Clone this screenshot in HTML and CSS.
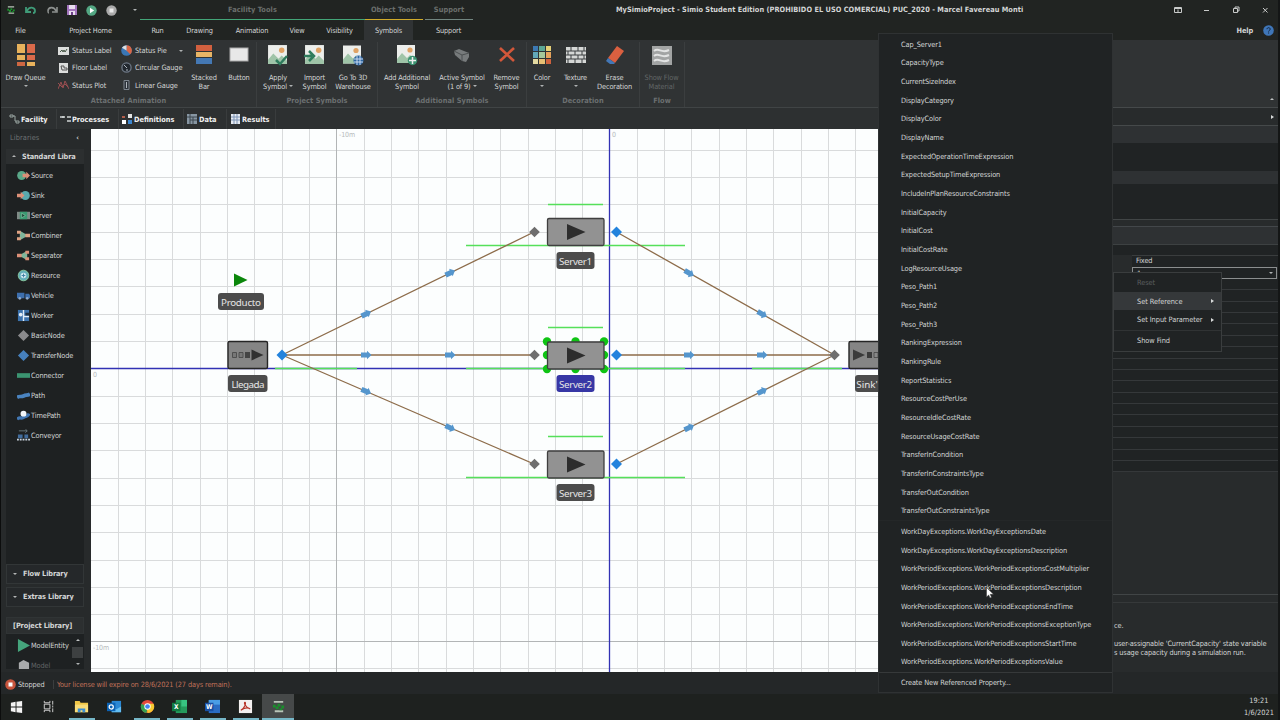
FILE: index.html
```html
<!DOCTYPE html>
<html lang="en">
<head>
  <meta charset="UTF-8">
  <meta name="viewport" content="width=device-width, initial-scale=1.0">
  <title>MySimioProject - Simio Student Edition</title>
  <link rel="stylesheet" href="styles.css">
</head>
<body>
  <!-- shared symbols -->
  <svg class="defs" width="0" height="0">
    <symbol id="picture" viewBox="0 0 20 20">
      <rect x="1" y="1" width="18" height="18" fill="#eceeeb"/>
      <circle cx="14" cy="6" r="2.6" fill="#e0a264"/>
      <path d="M1 15l5-6 5 5 3-3 5 5v3H1z" fill="#9fc4a8"/>
    </symbol>
    <symbol id="simio" viewBox="0 0 16 16">
      <path d="M3 2h10v2H3zM4 12h9v2H4z" fill="#b9c4b8"/>
      <path d="M2 6h3v3H2zM7 5h3v3H7zM11 7h3v3h-3zM5 8h3v3H5zM9 10h3v2H9z" fill="#1a8f2c"/>
    </symbol>
  </svg>

  <div class="app">
    <header class="titlebar">
      <div class="quick">
        <svg width="10" height="10"><use href="#simio"/></svg>
        <svg width="12" height="10" viewBox="0 0 12 10"><path d="M1 2v5h5M2 6c2-5 8-4 8 0 0 1-1 2-2 2" fill="none" stroke="#3f9b78" stroke-width="1.8"/></svg>
        <svg width="12" height="10" viewBox="0 0 12 10"><path d="M11 2v5H6M10 6C8 1 2 2 2 6c0 1 0 2 1 2" fill="none" stroke="#8c908e" stroke-width="1.6"/></svg>
        <svg width="10" height="10" viewBox="0 0 10 10"><path d="M0 0h10v10H0z" fill="#a274bd"/><path d="M2 0h6v4H2zM2 6h6v4H2z" fill="#e9def0"/><path d="M4 7h2v3H4z" fill="#6c4188"/></svg>
        <svg width="11" height="11" viewBox="0 0 11 11"><circle cx="5.500" cy="5.500" r="5.200" fill="#53a783"/><path d="M4 2.700l4.200 2.800L4 8.300z" fill="#fff"/></svg>
        <svg width="11" height="11" viewBox="0 0 11 11"><circle cx="5.500" cy="5.500" r="5.200" fill="#aaa"/><path d="M3.500 3.500h4v4h-4z" fill="#e9e9e9"/></svg>
        <i class="caret"></i>
      </div>
      <div class="tools tools-facility">Facility Tools</div>
      <div class="tools tools-object">Object Tools</div>
      <div class="tools tools-support">Support</div>
      <div class="title">MySimioProject - Simio Student Edition (PROHIBIDO EL USO COMERCIAL) PUC_2020 - Marcel Favereau Monti</div>
      <svg class="win" width="100" height="10" viewBox="0 0 100 10" fill="none" stroke="#c9cbca">
        <path d="M.5 2.500h7v5h-7zM.5 3.500h7M4 7V4.500M30 5.500h5"/><path d="M59.500 3.500h4v4h-4zM61 3V2h4v4h-1M89 3l4.500 4.500M93.500 3L89 7.500"/>
      </svg>
    </header>

    <nav class="tabs">
      <span class="tab" style="width:39px">File</span>
      <span class="tab" style="width:101px">Project Home</span>
      <span class="tab" style="width:33px">Run</span>
      <span class="tab" style="width:51px">Drawing</span>
      <span class="tab" style="width:54px">Animation</span>
      <span class="tab" style="width:36px">View</span>
      <span class="tab" style="width:49px">Visibility</span>
      <span class="tab active" style="width:49px">Symbols</span>
      <span class="tab" style="width:71px">Support</span>
      <span class="help">Help</span>
      <svg width="11" height="11" viewBox="0 0 11 11"><circle cx="5.500" cy="5.500" r="5.300" fill="#3f76b8"/><path d="M4 4.200c0-2 3.200-2 3.200 0 0 1.200-1.600 1.200-1.600 2.300M5.600 7.500v1" stroke="#132238" fill="none"/></svg>
    </nav>

    <section class="ribbon">
      <div class="group" style="width:256px">
        <div class="tools-row">
          <div class="big" style="width:49px">
            <svg width="20" height="22" viewBox="0 0 20 22"><path d="M1 0h8v9H1zM1 11h8v5H1z" fill="#e8b25c"/><path d="M11 0h8v9h-8zM11 11h8v5h-8z" fill="#db6a4a"/><path d="M1 18h8v4H1z" fill="#cf6742"/><path d="M11 18h8v4h-8z" fill="#e8b25c"/></svg>
            <span>Draw Queue</span><i class="caret"></i>
          </div>
          <div class="small-col" style="width:63px">
            <div><svg width="11" height="10" viewBox="0 0 11 10"><path d="M0 1h11v8H0z" fill="#dcdedd"/><path d="M2 6l2-2 1 2 1-2 1 2 2-3" stroke="#454" fill="none"/></svg>Status Label</div>
            <div><svg width="11" height="10" viewBox="0 0 11 10"><path d="M1 0h9v10H1z" fill="#dcdedd"/><path d="M3 3h3v2h3v2H4z" stroke="#555" fill="none"/></svg>Floor Label</div>
            <div><svg width="11" height="10" viewBox="0 0 11 10"><path d="M0 9l3-7 2 6 2-7 4 8M0 3l4 4 3-3 3 3" stroke="#984e50" fill="none"/></svg>Status Plot</div>
          </div>
          <div class="small-col" style="width:66px">
            <div><svg width="11" height="11" viewBox="0 0 11 11"><circle cx="5.500" cy="5.500" r="5.300" fill="#3a76b5"/><path d="M5.500.2a5.300 5.300 0 0 1 3.700 9.100L5.500 5.500z" fill="#db6645"/><path d="M5.500.2a5.300 5.300 0 0 0-4.600 2.600l4.600 2.700z" fill="#ddd"/></svg>Status Pie<i class="caret push"></i></div>
            <div><svg width="11" height="11" viewBox="0 0 11 11"><circle cx="5.500" cy="5.500" r="4.600" stroke="#6d7785" stroke-width="1.300" fill="#22282f"/><path d="M3 3l3 3M5 8h2" stroke="#aeb6be"/></svg>Circular Gauge</div>
            <div><svg width="11" height="11" viewBox="0 0 11 11"><path d="M3 .5h5v9H3z" stroke="#7c848c" fill="#2d333a"/><path d="M5.500 2v6" stroke="#b0b6bc"/></svg>Linear Gauge</div>
          </div>
          <div class="big" style="width:34px">
            <svg width="18" height="22" viewBox="0 0 18 22"><path d="M1 1h16v6H1z" fill="#d2603f"/><path d="M1 8h16v5H1z" fill="#e8b566"/><path d="M1 14h16v6H1z" fill="#4478b4"/></svg>
            <span>Stacked<br>Bar</span>
          </div>
          <div class="big" style="width:36px">
            <svg width="20" height="22" viewBox="0 0 20 22"><rect x="1" y="4" width="18" height="13" fill="#e8e8e8" stroke="#aaa"/></svg>
            <span>Button</span>
          </div>
        </div>
        <div class="caption">Attached Animation</div>
      </div>

      <div class="group" style="width:121px">
        <div class="tools-row">
          <div class="big" style="width:42px">
            <svg width="22" height="22" viewBox="0 0 22 22"><use href="#picture" width="21" height="21"/><path d="M9 16l4 4 7-8" stroke="#2f7c5d" stroke-width="2.500" fill="none"/></svg>
            <span>Apply<br>Symbol <i class="caret"></i></span>
          </div>
          <div class="big" style="width:31px">
            <svg width="22" height="22" viewBox="0 0 22 22"><use href="#picture" width="21" height="21"/><path d="M0 12h8M5 7l5 5-5 5" stroke="#2f7c5d" stroke-width="2.500" fill="none"/></svg>
            <span>Import<br>Symbol</span>
          </div>
          <div class="big" style="width:46px">
            <svg width="22" height="22" viewBox="0 0 22 22"><use href="#picture" width="20" height="21"/><circle cx="16.500" cy="16.500" r="5" fill="#2d65a0"/><path d="M12 15h9M12 18h9M15 12v9M18 12v9" stroke="#c9daf0"/></svg>
            <span>Go To 3D<br>Warehouse</span>
          </div>
        </div>
        <div class="caption">Project Symbols</div>
      </div>

      <div class="group" style="width:149px">
        <div class="tools-row">
          <div class="big" style="width:58px">
            <svg width="22" height="22" viewBox="0 0 22 22"><use href="#picture" width="20" height="20"/><circle cx="16.500" cy="16.500" r="4.700" fill="#3b9371"/><path d="M13 16.500h7M16.500 13v7" stroke="#eee" stroke-width="1.500"/></svg>
            <span>Add Additional<br>Symbol</span>
          </div>
          <div class="big" style="width:52px">
            <svg width="22" height="22" viewBox="0 0 22 22"><path d="M3 7l5-2 10 4v4l-3 5-4-1-7-6z" fill="#777b7c"/><path d="M3 7l8 4 7-2M11 11v6" stroke="#4d5152" fill="none"/></svg>
            <span>Active Symbol<br>(1 of 9) <i class="caret"></i></span>
          </div>
          <div class="big" style="width:37px">
            <svg width="22" height="22" viewBox="0 0 22 22"><path d="M4 4l14 13M18 4L4 17" stroke="#d3573a" stroke-width="2.600"/></svg>
            <span>Remove<br>Symbol</span>
          </div>
        </div>
        <div class="caption">Additional Symbols</div>
      </div>

      <div class="group" style="width:113px">
        <div class="tools-row">
          <div class="big" style="width:30px">
            <svg width="20" height="22" viewBox="0 0 20 22"><path d="M1 2h5v5H1z" fill="#3c79b4"/><path d="M7 2h6v5H7z" fill="#5da795"/><path d="M14 2h5v5h-5z" fill="#e7d178"/><path d="M1 8h5v6H1z" fill="#62a8b8"/><path d="M7 8h6v6H7z" fill="#a6c99a"/><path d="M14 8h5v6h-5z" fill="#e6a45c"/><path d="M1 15h5v5H1z" fill="#e3d9a1"/><path d="M7 15h6v5H7z" fill="#e6bf74"/><path d="M14 15h5v5h-5z" fill="#cf613d"/></svg>
            <span>Color</span><i class="caret"></i>
          </div>
          <div class="big" style="width:37px">
            <svg width="22" height="22" viewBox="0 0 22 22"><path d="M1 3h20v16H1z" fill="#d5d7d6"/><path d="M1 7h20M1 11h20M1 15h20M6 3v4M13 3v4M19 3v4M3 7v4M10 7v4M17 7v4M6 11v4M13 11v4M19 11v4M3 15v4M10 15v4M17 15v4" stroke="#3b3e40"/></svg>
            <span>Texture</span><i class="caret"></i>
          </div>
          <div class="big" style="width:41px">
            <svg width="22" height="22" viewBox="0 0 22 22"><path d="M13 2l7 5-9 12-7-5z" fill="#da6040"/><path d="M4 14l7 5-1 1H6l-4-3z" fill="#4377b6"/></svg>
            <span>Erase<br>Decoration</span>
          </div>
        </div>
        <div class="caption">Decoration</div>
      </div>

      <div class="group dim" style="width:45px">
        <div class="tools-row">
          <div class="big" style="width:43px">
            <svg width="22" height="22" viewBox="0 0 22 22"><path d="M1 2h20v19H1z" fill="#a2a4a4"/><path d="M3 7c5-4 7 3 15-1M3 12c5-4 7 3 15-1M3 17c5-4 7 3 15-1" stroke="#e2e3e3" stroke-width="2" fill="none"/></svg>
            <span>Show Flow<br>Material</span>
          </div>
        </div>
        <div class="caption">Flow</div>
      </div>
    </section>

    <nav class="views">
      <span style="width:51px"><svg width="11" height="10" viewBox="0 0 11 10"><path d="M1 1h3v2H1zM7 7h3v2H7zM4 2h2v5h1" stroke="#9aa5a2" fill="none"/></svg>Facility</span>
      <span style="width:62px"><svg width="11" height="10" viewBox="0 0 11 10"><path d="M0 3h5M7 3h4M7 7h4M3 2v2" stroke="#d0d4d4" stroke-width="1.500" fill="none"/></svg>Processes</span>
      <span style="width:65px"><svg width="11" height="10" viewBox="0 0 11 10"><path d="M6 0h4v4H6z" fill="#e3e3e3"/><path d="M0 6h4v4H0z" fill="#fff"/><path d="M6 6h4v4H6z" fill="#3c86cf"/><path d="M0 2h3v2H0z" fill="#b25d4b"/></svg>Definitions</span>
      <span style="width:43px"><svg width="11" height="10" viewBox="0 0 11 10"><path d="M0 0h10v10H0z" fill="#8796a3"/><path d="M0 3h10M3 0v10M6 3v7M3 6h7" stroke="#3c464f"/></svg>Data</span>
      <span style="width:49px"><svg width="11" height="10" viewBox="0 0 11 10"><path d="M1 0h9v10H1z" fill="#e5eaf0"/><path d="M1 3h9M1 6h9M4 0v10M7 0v10" stroke="#7d93b5"/></svg>Results</span>
    </nav>

    <main class="work">
      <aside class="sidebar">
        <div class="side-title">Libraries<b>‹</b></div>
        <div class="lib-head first"><i class="chev up"></i>Standard Libra</div>
        <ul class="lib">
          <li><svg viewBox="0 0 14 14"><circle cx="5" cy="7" r="4.800" fill="#5aa889"/><path d="M6 5h4V3l4 4-4 4V9H6z" fill="#dc9078"/></svg>Source</li>
          <li><svg viewBox="0 0 14 14"><circle cx="9" cy="7" r="4.800" fill="#5aa9ad"/><path d="M0 5h4V3l4 4-4 4V9H0z" fill="#dc9078"/></svg>Sink</li>
          <li><svg viewBox="0 0 14 14"><path d="M0 3h14v8H0z" fill="#7f8a86"/><path d="M3 3h8v8H3z" fill="#3a9a72"/><path d="M5 4.500l4 2.500-4 2.500z" fill="#1d4737" stroke="#9fd0b8" stroke-width=".6"/></svg>Server</li>
          <li><svg viewBox="0 0 14 14"><path d="M3 2l9 5-9 5z" fill="#7fb59a"/><path d="M0 2h4v3H0zM0 9h4v3H0zM9 5h5v4H9z" fill="#dfa283"/></svg>Combiner</li>
          <li><svg viewBox="0 0 14 14"><path d="M11 2L2 7l9 5z" fill="#7fb59a"/><path d="M9 2h4v3H9zM9 9h4v3H9zM0 5h5v4H0z" fill="#dc9078"/></svg>Separator</li>
          <li><svg viewBox="0 0 14 14"><circle cx="7" cy="7" r="5.700" fill="#64aeb9" stroke="#8acb9f"/><circle cx="7" cy="7" r="3" fill="#cde6ee"/><path d="M5 7h4M7 5v4" stroke="#3d80a3"/></svg>Resource</li>
          <li><svg viewBox="0 0 14 14"><path d="M0 4h8v6H0zM9 5h4l1 2v3H9z" fill="#3d6fae"/><circle cx="3" cy="10" r="1.500" fill="#8ea9cb"/><circle cx="11" cy="10" r="1.500" fill="#8ea9cb"/></svg>Vehicle</li>
          <li><svg viewBox="0 0 14 14"><path d="M1 1h12v12H1z" fill="#3c72ac"/><circle cx="4" cy="6" r="2" fill="#e3eef8"/><path d="M7 1v12M7 8h6" stroke="#e3eef8" stroke-width="1.500"/><path d="M9 4h4v3H9z" fill="#1d2e41"/></svg>Worker</li>
          <li><svg viewBox="0 0 14 14"><path d="M7 1l6 6-6 6-6-6z" fill="#8a8a8c"/></svg>BasicNode</li>
          <li><svg viewBox="0 0 14 14"><path d="M7 1l6 6-6 6-6-6z" fill="#4680bd"/></svg>TransferNode</li>
          <li><svg viewBox="0 0 14 14"><path d="M0 4.500h14v5H0z" fill="#3b9471"/></svg>Connector</li>
          <li><svg viewBox="0 0 14 14"><path d="M0 9c3-2 4 0 7-1.500s4 0 7-2" stroke="#4a83bf" stroke-width="4" fill="none"/></svg>Path</li>
          <li><svg viewBox="0 0 14 14"><path d="M0 11c3-3 4 0 7-2s4 0 6-4" stroke="#4277b3" stroke-width="3.500" fill="none"/><circle cx="7" cy="5" r="3.200" fill="#f2f6fa"/></svg>TimePath</li>
          <li><svg viewBox="0 0 14 14"><path d="M2 2h9M9 0l2 2-2 2" stroke="#6c7b80" fill="none"/><path d="M1 6h5v4H1zM8 6h4v4H8z" fill="#416c9c"/><path d="M0 11.500h14" stroke="#c9d4dd" stroke-width="2" stroke-dasharray="2 1"/></svg>Conveyor</li>
        </ul>
        <div class="lib-head boxed"><i class="chev"></i>Flow Library</div>
        <div class="lib-head boxed"><i class="chev"></i>Extras Library</div>
        <div class="lib-head project">[Project Library]</div>
        <div class="project-list">
          <ul class="lib">
            <li><svg viewBox="0 0 14 14"><path d="M1 0l13 7-13 7z" fill="#45a57c"/></svg>ModelEntity</li>
            <li class="dim"><svg viewBox="0 0 14 14"><path d="M2 4l5-3 6 3v8H2z" fill="#a9abac"/></svg>Model</li>
          </ul>
          <div class="scroll"><i class="caret up"></i><em></em><i class="caret"></i></div>
        </div>
      </aside>

      <svg class="canvas" width="787" height="543" viewBox="91 129 787 543">
        <defs>
          <g id="server">
            <rect x="-28" y="-13.500" width="56.500" height="27" rx="1.500" fill="#929292" stroke="#3f3f3f" stroke-width="1.300"/>
            <path d="M-8.500-8L10 0-8.500 8z" fill="#2d2d2d"/>
          </g>
          <path id="in" d="M0-5.300L5.300 0 0 5.300-5.300 0z" fill="#6e6e6e"/>
          <path id="out" d="M0-5.500L5.500 0 0 5.500-5.500 0z" fill="#2383dd"/>
          <path id="arrow" d="M-5-2.600H1V-4.200L5.500 0 1 4.200V2.600H-5z" fill="#5596cd"/>
          <circle id="grip" r="4.200" fill="#0fc414"/>
        </defs>
        <rect x="91" y="129" width="787" height="543" fill="#fcfefe"/>
        <path class="grid" d="M118.500 129v543M145.500 129v543M172.500 129v543M200.500 129v543M227.500 129v543M254.500 129v543M282.500 129v543M309.500 129v543M364.500 129v543M391.500 129v543M418.500 129v543M446.500 129v543M473.500 129v543M500.500 129v543M528.500 129v543M555.500 129v543M582.500 129v543M637.500 129v543M664.500 129v543M691.500 129v543M719.500 129v543M746.500 129v543M773.500 129v543M801.500 129v543M828.500 129v543M855.500 129v543"/>
        <path class="grid" d="M91 150.500h787M91 177.500h787M91 204.500h787M91 232.500h787M91 259.500h787M91 286.500h787M91 314.500h787M91 341.500h787M91 396.500h787M91 423.500h787M91 450.500h787M91 478.500h787M91 505.500h787M91 532.500h787M91 560.500h787M91 587.500h787M91 614.500h787M91 668.500h787"/>
        <path class="grid major" d="M336.500 129v543M91 641.500h787"/>
        <path d="M91 368.500h787M609.500 129v543" stroke="#3232b4" stroke-width="1.300"/>
        <g class="mark"><text x="339" y="137">-10m</text><text x="612" y="137">0</text><text x="93" y="377">0</text><text x="93" y="650">-10m</text></g>

        <path d="M548 204.500h55M548 327.500h55M548 436.500h55M466 245.500h219M466 368.500h219M466 477.500h219M275 368.500h82M752 368.500h90" stroke="#55e05a" stroke-width="1.400"/>
        <path d="M282 355L534 232M282 355H534M282 355L534 464M616.500 232L834.500 355M616.500 355H834.500M616.500 464L834.500 355" stroke="#8d6c4a" stroke-width="1.300" fill="none"/>
        <use href="#arrow" transform="translate(366 314) rotate(-26)"/><use href="#arrow" transform="translate(450 273) rotate(-26)"/>
        <use href="#arrow" x="366" y="355"/><use href="#arrow" x="450" y="355"/>
        <use href="#arrow" transform="translate(366 391.300) rotate(23.400)"/><use href="#arrow" transform="translate(450 427.700) rotate(23.400)"/>
        <use href="#arrow" transform="translate(689 273) rotate(29.400)"/><use href="#arrow" transform="translate(762 314) rotate(29.400)"/>
        <use href="#arrow" x="689" y="355"/><use href="#arrow" x="762" y="355"/>
        <use href="#arrow" transform="translate(689 427.700) rotate(-26.500)"/><use href="#arrow" transform="translate(762 391.300) rotate(-26.500)"/>

        <use href="#in" x="534.500" y="232"/><use href="#in" x="534.500" y="355"/><use href="#in" x="534.500" y="464"/><use href="#in" x="834.500" y="355"/>
        <use href="#out" x="282" y="355"/><use href="#out" x="616.500" y="232"/><use href="#out" x="616.500" y="355"/><use href="#out" x="616.500" y="464"/>

        <use href="#grip" x="547" y="341.500"/><use href="#grip" x="575.500" y="341.500"/><use href="#grip" x="604" y="341.500"/>
        <use href="#grip" x="547" y="355"/><use href="#grip" x="604" y="355"/>
        <use href="#grip" x="547" y="369"/><use href="#grip" x="575.500" y="369"/><use href="#grip" x="604" y="369"/>
        <use href="#server" x="575.500" y="232"/><use href="#server" x="575.500" y="355.500"/><use href="#server" x="575.500" y="464.500"/>

        <rect x="228" y="341.500" width="39.500" height="27" rx="1.500" fill="#858585" stroke="#252525" stroke-width="1.400"/>
        <path d="M232.500 352.500h4v5h-4zM239 352.500h4v5h-4z" fill="#777" stroke="#444" stroke-width=".8"/><path d="M245 352h5v6h-5z" fill="#444"/><path d="M251.500 349.500l12 5.500-12 5.500z" fill="#303030"/>
        <rect x="849" y="341.500" width="40" height="27" rx="1.500" fill="#858585" stroke="#252525" stroke-width="1.400"/>
        <path d="M853 349.500l12 5.500-12 5.500z" fill="#3a3a3a"/><path d="M867 352h5v6h-5z" fill="#3a3a3a"/><path d="M874 352.500h4v5h-4z" fill="#888" stroke="#444" stroke-width=".8"/>
        <path d="M234 273.500l13.500 6.500-13.500 6.500z" fill="#0b870b"/>

        <g class="tag">
          <rect x="218" y="293" width="46" height="17" rx="3"/><text x="241" y="305.500" textLength="40">Producto</text>
          <rect x="228" y="375" width="39.500" height="17" rx="3"/><text x="248" y="387.700" textLength="33">Llegada</text>
          <rect x="556.500" y="252" width="38" height="17" rx="3"/><text x="575.500" y="265" textLength="33">Server1</text>
          <rect class="sel" x="556.500" y="375" width="38" height="17" rx="3"/><text x="575.500" y="388" textLength="33">Server2</text>
          <rect x="556.500" y="484" width="38" height="17" rx="3"/><text x="575.500" y="497" textLength="33">Server3</text>
          <rect x="855" y="375" width="30" height="17" rx="3"/><text x="867" y="388">Sink'</text>
        </g>
      </svg>

      <aside class="props">
        <div class="props-top"><i class="caret up"></i></div>
        <div class="props-head"><i class="caret right"></i></div>
        <div class="band"></div>
        <div class="dark" style="height:28px"></div>
        <div class="band short"></div>
        <div class="dark" style="height:35px"></div>
        <div class="line" style="height:7px"></div>
        <div class="band bordered"></div>
        <div class="dark" style="height:10px"></div>
        <div class="row">Fixed</div>
        <div class="row edit">1<i class="caret"></i></div>
        <div class="rows"></div>
        <div class="blank"></div>
        <div class="line" style="height:8px"></div>
        <div class="desc">
          <p>ce.</p>
          <p>user-assignable 'CurrentCapacity' state variable<br>s usage capacity during a simulation run.</p>
        </div>
      </aside>
    </main>

    <footer class="status">
      <svg width="11" height="11" viewBox="0 0 11 11"><circle cx="5.500" cy="5.500" r="5.300" fill="#c8553d"/><path d="M3.500 3.500h4v4h-4z" fill="#fff"/></svg>
      <span class="state">Stopped</span>
      <span class="license">Your license will expire on 28/6/2021 (27 days remain).</span>
    </footer>

    <footer class="taskbar">
      <div class="task start"><svg viewBox="0 0 16 16"><path d="M2 4l5-1v5H2zM8 3l6-1v6H8zM2 9h5v5l-5-1zM8 9h6v6l-6-1z" fill="#f4f4f4"/></svg></div>
      <div class="task view"><svg viewBox="0 0 16 16"><path d="M3.500 5.500h6v5h-6zM3.500 2v2h6V2M3.500 14v-2h6v2M12.500 2v4M12.500 7v2M12.500 10v4" stroke="#d5d5d5" fill="none"/></svg></div>
      <div class="task open"><svg viewBox="0 0 16 16"><path d="M1 2h5l1 2h8v10H1z" fill="#f0c646"/><path d="M1 6h14v8H1z" fill="#f9dc78"/><path d="M4 14v-4h8v4H9v-2H7v2z" fill="#3c8ed2"/></svg></div>
      <div class="task"><svg viewBox="0 0 16 16"><path d="M5 2h10v12H5z" fill="#2b88d4"/><path d="M5 8l5 3 5-3v6H5z" fill="#62bdf3"/><path d="M0 4h9v9H0z" fill="#0b62b4"/><circle cx="4.500" cy="8.500" r="2.200" stroke="#fff" stroke-width="1.300" fill="none"/></svg></div>
      <div class="task open"><svg viewBox="0 0 16 16"><circle cx="8" cy="8" r="7" fill="#e3493b"/><path d="M8 8L1.500 5A7 7 0 0 0 7 15z" fill="#34a152"/><path d="M8 8h-1l1 7a7 7 0 0 0 6.500-10H8z" fill="#f7c830"/><circle cx="8" cy="8" r="3.400" fill="#fff"/><circle cx="8" cy="8" r="2.500" fill="#4385ef"/></svg></div>
      <div class="task open"><svg viewBox="0 0 16 16"><path d="M4 1h12v14H4z" fill="#259a5c"/><path d="M10 1h6v7h-6z" fill="#38c481"/><path d="M0 4h9v9H0z" fill="#117b42"/><text x="4.500" y="11">X</text></svg></div>
      <div class="task open"><svg viewBox="0 0 16 16"><path d="M4 1h12v14H4z" fill="#2a6cc3"/><path d="M4 1h12v5H4z" fill="#4a9de5"/><path d="M0 4h9v9H0z" fill="#194fa3"/><text x="4.500" y="11">W</text></svg></div>
      <div class="task open"><svg viewBox="0 0 16 16"><path d="M1 1h14v14H1z" fill="#f3f0ef"/><path d="M3 12c4-2 6-8 4.500-8.500S7 9 13 10.500C10 8.500 6 10 3 12z" stroke="#b83428" stroke-width="1.200" fill="none"/></svg></div>
      <div class="task open current"><svg viewBox="0 0 16 16"><use href="#simio" width="16" height="16"/></svg></div>
      <div class="clock">19:21<br>1/6/2021</div>
    </footer>
  </div>

  <div class="menu context">
    <div class="item off">Reset</div>
    <div class="item hot">Set Reference<i class="caret right"></i></div>
    <div class="item">Set Input Parameter<i class="caret right"></i></div>
    <div class="item last">Show Find</div>
  </div>

  <div class="menu refs">
    <div class="item">Cap_Server1</div>
    <div class="item">CapacityType</div>
    <div class="item">CurrentSizeIndex</div>
    <div class="item">DisplayCategory</div>
    <div class="item">DisplayColor</div>
    <div class="item">DisplayName</div>
    <div class="item">ExpectedOperationTimeExpression</div>
    <div class="item">ExpectedSetupTimeExpression</div>
    <div class="item">IncludeInPlanResourceConstraints</div>
    <div class="item">InitialCapacity</div>
    <div class="item">InitialCost</div>
    <div class="item">InitialCostRate</div>
    <div class="item">LogResourceUsage</div>
    <div class="item">Peso_Path1</div>
    <div class="item">Peso_Path2</div>
    <div class="item">Peso_Path3</div>
    <div class="item">RankingExpression</div>
    <div class="item">RankingRule</div>
    <div class="item">ReportStatistics</div>
    <div class="item">ResourceCostPerUse</div>
    <div class="item">ResourceIdleCostRate</div>
    <div class="item">ResourceUsageCostRate</div>
    <div class="item">TransferInCondition</div>
    <div class="item">TransferInConstraintsType</div>
    <div class="item">TransferOutCondition</div>
    <div class="item">TransferOutConstraintsType</div>
    <div class="item gap">WorkDayExceptions.WorkDayExceptionsDate</div>
    <div class="item">WorkDayExceptions.WorkDayExceptionsDescription</div>
    <div class="item">WorkPeriodExceptions.WorkPeriodExceptionsCostMultiplier</div>
    <div class="item">WorkPeriodExceptions.WorkPeriodExceptionsDescription</div>
    <div class="item">WorkPeriodExceptions.WorkPeriodExceptionsEndTime</div>
    <div class="item">WorkPeriodExceptions.WorkPeriodExceptionsExceptionType</div>
    <div class="item">WorkPeriodExceptions.WorkPeriodExceptionsStartTime</div>
    <div class="item">WorkPeriodExceptions.WorkPeriodExceptionsValue</div>
    <div class="item create">Create New Referenced Property...</div>
  </div>

  <svg class="cursor" width="8" height="12" viewBox="0 0 8 12"><path d="M.5.500v9.500l2.200-2 1.300 3 1.500-.7-1.300-3H7.500z" fill="#fff" stroke="#333" stroke-width=".5"/></svg>
</body>
</html>
```
FILE: styles.css
```css
* {
  box-sizing: border-box;
}
body {
  margin: 0;
  width: 1280px;
  height: 720px;
  overflow: hidden;
  background-color: #222526;
  color: #d4d6d6;
  font-family: "DejaVu Sans Condensed", "DejaVu Sans", sans-serif;
  font-stretch: condensed;
  font-size: 7.33px;
  letter-spacing: -0.12px;
  line-height: 9px;
}
.defs {
  position: absolute;
}
svg {
  flex: none;
}
ul, p {
  margin: 0;
  padding: 0;
  list-style: none;
}
.app {
  display: flex;
  flex-direction: column;
  height: 720px;
  border-left: 1px solid #0c0d0d;
  border-right: 2px solid #141616;
}

/* little arrows */
.caret {
  display: inline-block;
  flex: none;
  border: 2px solid transparent;
  border-top-color: #b0b3b3;
  border-bottom: 0;
}
.caret.up {
  border: 2px solid transparent;
  border-bottom-color: #c0c3c3;
  border-top: 0;
}
.caret.right {
  border: 2px solid transparent;
  border-left: 3px solid #d8dada;
  border-right: 0;
}

/* title bar */
.titlebar {
  display: flex;
  height: 20px;
  background-color: #212422;
}
.quick {
  display: flex;
  align-items: center;
  gap: 9px;
  width: 139px;
  padding-left: 5px;
}
.quick .caret {
  margin-left: 7px;
}
.tools {
  height: 20px;
  padding-top: 5px;
  text-align: center;
  font-weight: bold;
  letter-spacing: 0.08px;
  color: #6b6f6d;
}
.tools-facility {
  width: 225px;
  border-bottom: 1px solid #43a578;
}
.tools-object {
  width: 58px;
  border-bottom: 1px solid #d1ab2b;
}
.tools-support {
  width: 48px;
  margin-left: 2px;
  border-bottom: 1px solid #718580;
}
.title {
  width: 410px;
  margin-left: 143px;
  padding-top: 5px;
  font-weight: bold;
  letter-spacing: 0.05px;
  white-space: nowrap;
}
.win {
  margin: 5px 0 0 auto;
  margin-right: 4px;
}

/* ribbon */
.tabs {
  display: flex;
  align-items: center;
  height: 20px;
  background-color: #212422;
}
.tab {
  height: 20px;
  line-height: 21px;
  text-align: center;
}
.tab.active {
  background-color: #303334;
}
.help {
  margin: 0 10px 0 auto;
  font-weight: bold;
}
.help + svg {
  margin-right: 4px;
}
.ribbon {
  display: flex;
  height: 68px;
  padding-top: 2px;
  background-color: #303334;
  border-bottom: 1px solid #404445;
}
.group {
  display: flex;
  flex-direction: column;
  border-right: 1px solid #3b3e3f;
}
.tools-row {
  display: flex;
  height: 54px;
}
.big {
  display: flex;
  flex-direction: column;
  align-items: center;
  flex: none;
  padding-top: 2px;
  text-align: center;
  white-space: nowrap;
}
.big > span {
  margin-top: 7px;
}
.big > .caret {
  margin-top: 3px;
}
.big span .caret {
  vertical-align: 2px;
}
.small-col {
  display: flex;
  flex-direction: column;
  flex: none;
  margin-left: 8px;
  white-space: nowrap;
}
.small-col + .small-col {
  margin-left: 0;
}
.small-col div {
  display: flex;
  align-items: center;
  gap: 3px;
  height: 17.3px;
}
.small-col .push {
  margin-left: 9px;
}
.caption {
  height: 10px;
  text-align: center;
  font-weight: bold;
  letter-spacing: 0.08px;
  color: #6c7071;
}
.dim {
  color: #626667;
}

/* view tabs */
.views {
  display: flex;
  height: 21px;
  padding: 1px 0 0 5px;
  background-color: #2d3031;
}
.views span {
  display: flex;
  align-items: center;
  gap: 1px;
  padding-left: 3px;
  font-weight: bold;
  letter-spacing: 0;
  color: #f0f0f0;
  border-right: 1px solid #393c3d;
}

/* main area */
.work {
  display: flex;
  height: 543px;
}
.sidebar {
  width: 90px;
  padding: 4px 7px 0 5px;
  background-color: #272a2b;
}
.side-title {
  display: flex;
  justify-content: space-between;
  height: 16px;
  padding: 0 5px 0 4px;
  letter-spacing: 0.1px;
  color: #6e7273;
}
.side-title b {
  color: #d0d2d2;
}
.lib-head {
  height: 15px;
  padding-left: 16px;
  overflow: hidden;
  white-space: nowrap;
  font-weight: bold;
  line-height: 15px;
  position: relative;
  background-color: #2c2f30;
}
.chev {
  position: absolute;
  left: 6px;
  top: 6px;
  border: 2px solid transparent;
  border-top-color: #b4b6b6;
  border-bottom: 0;
}
.chev.up {
  border: 2px solid transparent;
  border-bottom-color: #b4b6b6;
  border-top: 0;
}
.lib {
  height: 400px;
  padding-top: 1px;
  background-color: #1e2122;
}
.lib li {
  display: flex;
  align-items: center;
  gap: 1px;
  height: 20px;
  padding-left: 11px;
  white-space: nowrap;
}
.lib svg {
  width: 13px;
  height: 13px;
}
.lib-head.boxed {
  height: 20px;
  margin-bottom: 3px;
  line-height: 18px;
  border: 1px solid #323637;
  background-color: #25282a;
}
.lib-head.boxed .chev {
  top: 8px;
}
.lib-head.project {
  margin-top: 10px;
  height: 17px;
  padding-left: 6px;
  line-height: 16px;
  border: 1px solid #303435;
}
.project-list {
  display: flex;
  height: 35px;
  overflow: hidden;
  background-color: #1e2122;
}
.project-list .lib {
  width: 66px;
  height: 42px;
  overflow: hidden;
}
.scroll {
  display: flex;
  flex-direction: column;
  align-items: center;
  justify-content: space-between;
  width: 11px;
  padding: 5px 0 4px;
}
.scroll em {
  width: 11px;
  height: 11px;
  background-color: #3d4041;
}
.canvas {
  display: block;
  flex: none;
}
.grid {
  stroke: #d9dbdc;
  stroke-width: 1;
}
.grid.major {
  stroke: #b2b5b6;
}
.mark {
  font-size: 7px;
  fill: #b6babb;
}
.tag {
  font-family: "Noto Sans", sans-serif;
  font-size: 9.8px;
  letter-spacing: 0;
  text-anchor: middle;
  fill: #e6e6e6;
}
.tag rect {
  fill: #4c4c4c;
}
.tag .sel {
  fill: #3737a5;
}

/* properties */
.props {
  flex: none;
  width: 165px;
  margin-top: -32px;
  margin-left: 235px;
  height: 578px;
  border-bottom: 1px solid #4a4d4f;
  background-color: #282b2c;
}
.props-top,
.props-head {
  display: flex;
  justify-content: flex-end;
  align-items: center;
  padding-right: 4px;
  border-bottom: 1px solid #45494a;
}
.props-top {
  height: 11px;
  padding-bottom: 6px;
  background-color: #303334;
}
.props-head {
  height: 18px;
}
.band {
  height: 17px;
  background-color: #2e3133;
}
.band.short {
  height: 13px;
}
.band.bordered {
  height: 19px;
  border-top: 1px solid #43474a;
  border-bottom: 1px solid #3d4142;
}
.dark {
  background-color: #202324;
}
.line {
  border-top: 1px solid #414546;
}
.row {
  height: 12px;
  margin-left: 19px;
  padding: 0 0 0 4px;
  border-top: 1px solid #3a3d3e;
  background-color: #202324;
}
.row.edit {
  display: flex;
  justify-content: space-between;
  align-items: center;
  height: 12px;
  margin-right: 1px;
  padding-right: 3px;
  border: 1px solid #8b8e8f;
}
.rows {
  height: 193px;
  background: repeating-linear-gradient(#202324 0, #202324 10.37px, #35383a 10.37px, #35383a 11.37px);
}
.blank {
  height: 122px;
}
.desc {
  height: 74px;
  padding: 18px 0 0 1px;
  border-top: 1px solid #36393a;
  white-space: nowrap;
}
.desc p + p {
  margin-top: 9px;
}

/* status bar and taskbar */
.status {
  display: flex;
  align-items: center;
  height: 22px;
  padding: 3px 0 0 4px;
  background-color: #242728;
}
.state {
  width: 36px;
  margin-left: 2px;
  border-right: 1px solid #3b3e3f;
}
.license {
  margin-left: 3px;
  color: #c07158;
}
.taskbar {
  display: flex;
  flex: 1;
  background-color: #1e211f;
}
.task {
  display: flex;
  justify-content: center;
  width: 26px;
  margin-right: 6.8px;
  padding-top: 5px;
}
.task.start {
  margin-left: 2px;
}
.task svg {
  width: 15px;
  height: 15px;
}
.task text {
  font-size: 7px;
  font-weight: bold;
  text-anchor: middle;
  fill: #fff;
}
.task.open {
  border-bottom: 2px solid #76b7c7;
}
.task.current {
  width: 32px;
  margin-left: -3px;
  background-color: #464949;
}
.clock {
  margin-left: auto;
  padding: 1px 4px 0 0;
  text-align: center;
  letter-spacing: 0.05px;
  line-height: 12px;
}

/* popups */
.menu {
  position: absolute;
  white-space: nowrap;
  background-color: #202324;
  border: 1px solid #3a3d3e;
}
.menu .item {
  display: flex;
  align-items: center;
}
.context {
  left: 1113px;
  top: 272px;
  width: 109px;
  height: 80px;
}
.context .item {
  justify-content: space-between;
  height: 18.7px;
  padding: 0 7px 0 23px;
  letter-spacing: -0.05px;
}
.context .off {
  color: #5b5e5f;
}
.context .hot {
  background-color: #35383a;
}
.context .last {
  height: 19px;
  margin-top: 1px;
  border-top: 1px solid #303334;
}
.refs {
  left: 878px;
  top: 33px;
  width: 235px;
  height: 660px;
  padding-top: 1px;
  border-color: #2f3233;
}
.refs .item {
  height: 18.66px;
  padding-left: 22px;
  letter-spacing: -0.1px;
}
.refs .gap {
  height: 20.66px;
  padding-top: 2px;
  border-top: 1px solid #242728;
}
.refs .create {
  height: 20px;
  margin-top: 1px;
  border-top: 1px solid #36393a;
}
.cursor {
  position: absolute;
  left: 986px;
  top: 587px;
}
```
